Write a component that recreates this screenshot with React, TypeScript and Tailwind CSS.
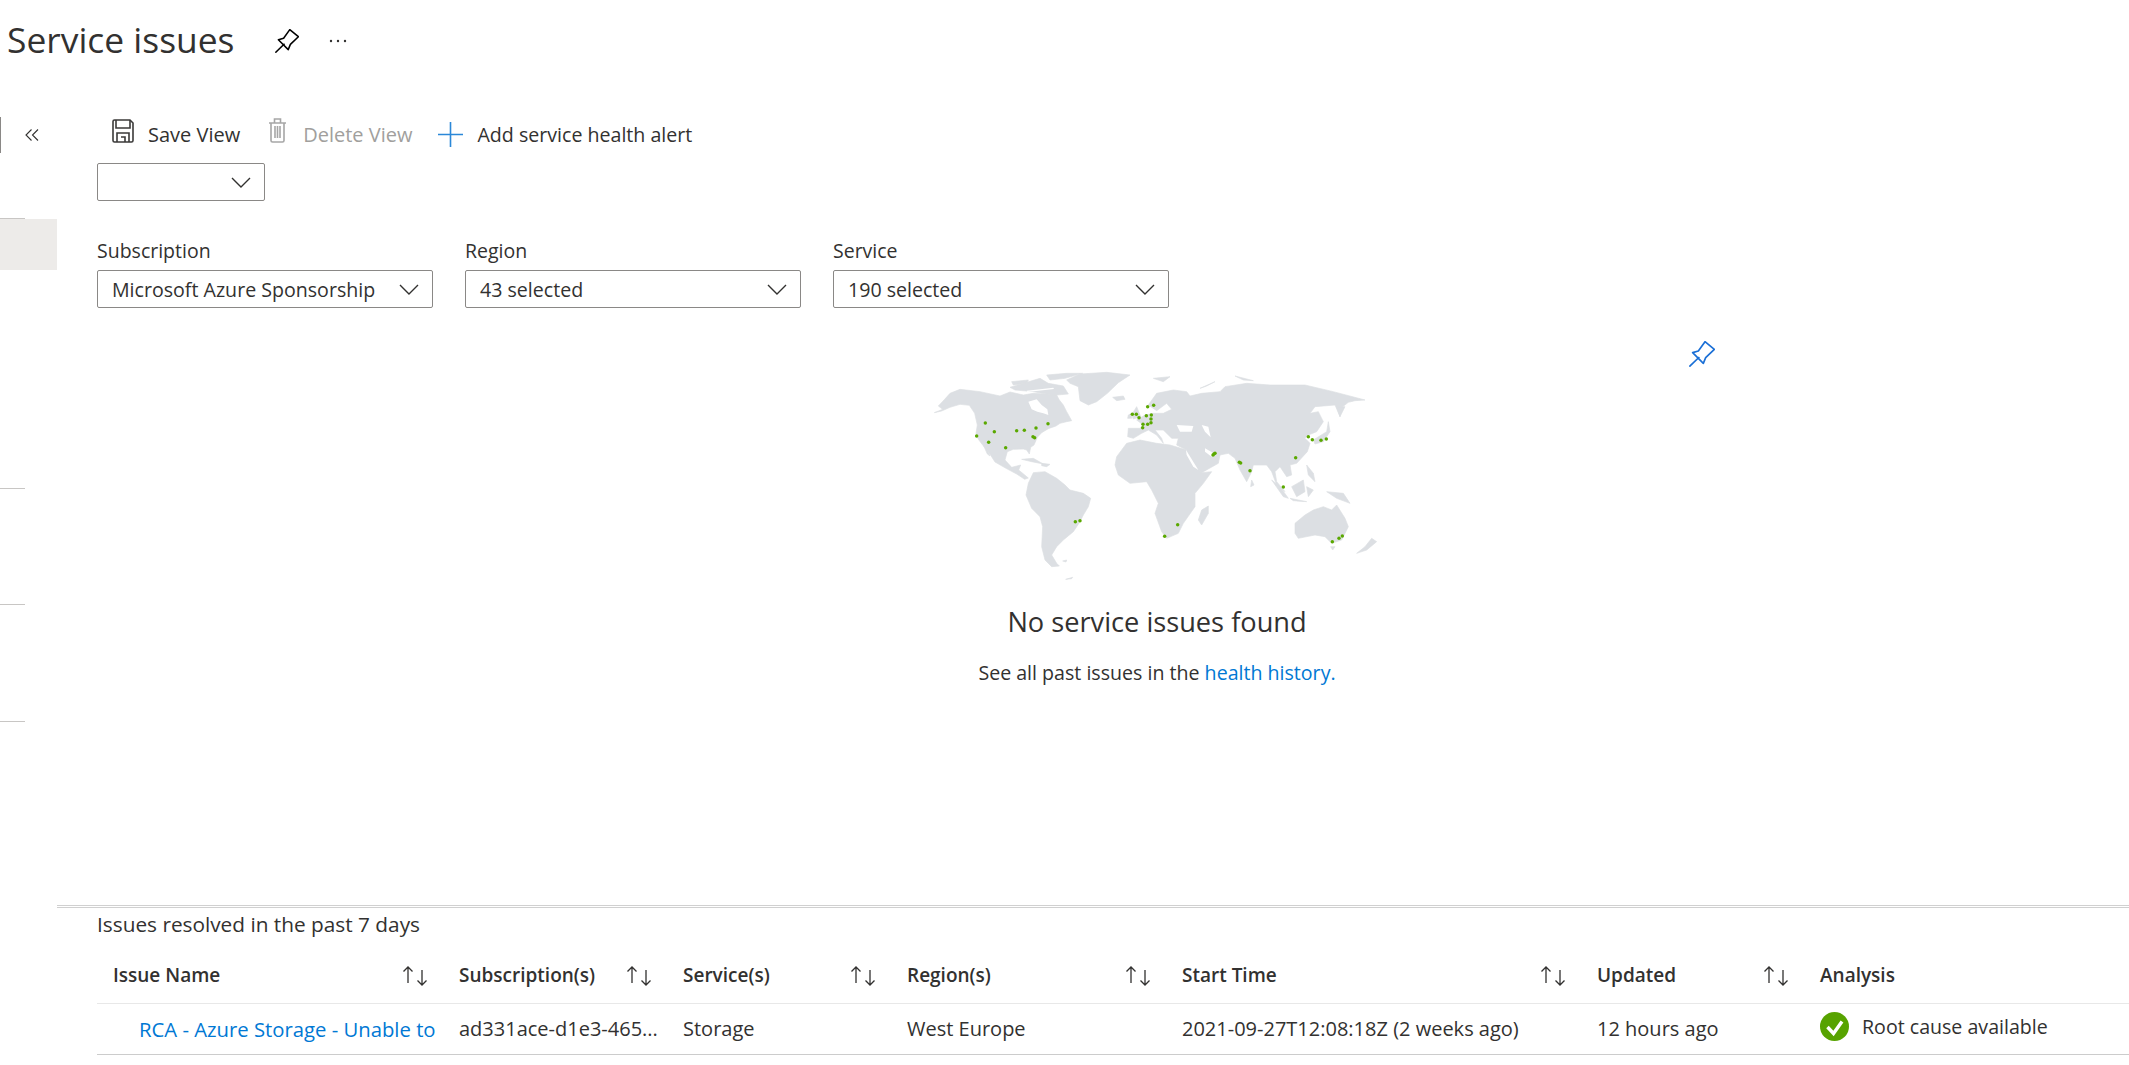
const font = 'font-["Open_Sans",sans-serif]';

const dots: [number, number][] = [
  [256, 219], [283, 245], [350, 242], [373, 241], [408, 234], [444, 221], [230, 258], [266, 277], [317, 293], [399, 260], [404, 263],
  [743, 170], [761, 166], [697, 193], [709, 193], [717, 203], [739, 197], [754, 195], [753, 207], [753, 218], [743, 223], [729, 223], [728, 233],
  [1225, 260], [1237, 269], [1263, 271], [1279, 267], [1187, 323], [939, 315], [942, 312], [945, 310], [1018, 337], [1022, 339], [1050, 362], [1150, 411],
  [526, 515], [540, 512], [833, 524], [794, 559], [1297, 575], [1317, 565], [1327, 558],
];

const land = [
  // north america
  '103,188 128,178 115,168 132,150 150,130 180,118 240,125 300,138 330,126 370,135 400,130 440,132 470,135 478,150 490,165 500,185 515,212 500,215 480,220 468,228 445,236 425,248 412,262 402,285 392,292 388,312 380,300 370,297 340,298 322,305 315,330 335,352 362,345 356,360 385,384 374,388 350,372 318,355 285,336 265,305 248,285 235,268 228,250 232,225 224,190 208,166 180,163 150,172 125,183',
  '255,280 270,318 262,312 250,285',
  '335,95 385,90 380,100 340,105',
  '330,112 420,85 445,100 490,108 505,132 460,136 400,125 345,120',
  '440,75 500,70 548,70 495,85 450,90',
  // greenland, iceland
  '500,90 540,72 620,67 690,75 655,98 622,130 590,155 565,165 540,152 535,110 510,100',
  '638,142 670,138 675,148 650,152',
  '365,328 400,325 430,342 395,335',
  '425,340 450,343 440,350 425,347',
  // south america
  '400,368 435,365 470,385 495,405 510,420 550,430 572,445 565,470 550,495 540,515 520,545 490,570 470,590 455,615 470,640 478,648 455,650 435,630 425,590 428,530 420,500 395,475 378,435 385,400',
  '488,633 500,630 498,636',
  '497,688 518,682 515,686',
  // africa
  '650,320 680,280 720,270 770,280 810,285 860,300 880,340 905,368 935,365 910,400 885,430 885,470 850,520 835,550 800,565 785,545 765,490 775,460 755,420 740,395 690,400 655,375 645,345',
  '925,468 925,490 905,525 895,510 905,480',
  // eurasia
  '683,260 685,235 720,235 730,225 710,210 735,195 760,190 790,190 815,178 800,160 770,182 745,165 770,130 820,120 860,125 870,138 905,130 960,125 975,110 1040,100 1110,105 1215,105 1300,125 1395,150 1365,152 1345,157 1322,175 1320,200 1305,165 1245,170 1230,190 1255,185 1270,215 1250,245 1225,255 1215,265 1230,280 1222,305 1190,340 1170,345 1175,375 1160,380 1140,350 1125,365 1130,395 1155,425 1130,405 1115,365 1100,345 1060,345 1055,365 1040,395 1020,360 1005,325 985,310 960,315 955,340 905,368 880,345 860,300 830,285 835,265 815,265 790,240 765,240 785,265 790,280 770,255 745,240 725,250 700,265',
  // islands
  '695,195 710,170 722,200 700,207',
  '685,195 695,190 695,205 683,205',
  '1240,270 1280,245 1285,215 1290,245 1270,275 1245,282',
  '1310,170 1335,170 1320,200',
  '1055,390 1062,405 1052,410',
  '1115,390 1140,410 1165,445 1150,440',
  '1170,445 1220,455 1180,452',
  '1175,410 1210,390 1215,425 1190,440',
  '1220,410 1240,420 1225,440',
  '1220,345 1240,370 1245,395 1225,375',
  '1280,425 1330,430 1350,460 1310,445',
  '1185,520 1215,495 1240,480 1270,470 1295,480 1310,465 1335,505 1345,530 1325,570 1295,580 1275,560 1245,555 1195,565 1185,550',
  '1292,590 1305,590 1298,600',
  '1415,565 1430,575 1400,600 1370,610 1395,590',
  '760,85 810,80 790,95',
  '900,115 945,95 920,108',
  '1005,78 1060,92 1030,90',
];

const water = [
  '385,155 410,148 425,165 442,178 445,195 430,190 412,185 395,178',
  '380,122 460,113 462,117 382,126',
  '830,225 880,228 875,245 840,245',
  '905,225 925,230 932,262 915,245',
  '915,295 950,315 935,320 915,305',
  '858,300 895,360 880,350 860,315',
];

function WorldMap() {
  return (
    <svg width="520" height="250" viewBox="-9 0 1560 750" className="block">
      {land.map((p, i) => <polygon key={i} points={p} fill="#dcdfe3" stroke="#dcdfe3" strokeWidth="2" strokeLinejoin="round" />)}
      {water.map((p, i) => <polygon key={i} points={p} fill="#ffffff" />)}
      {dots.map(([x, y], i) => <circle key={i} cx={x} cy={y} r="5.2" fill="#5aa800" />)}
    </svg>
  );
}

function PinIcon({ color, size }: { color: string; size: number }) {
  return (
    <svg width={size} height={size} viewBox="0 0 78 78" fill="none" stroke={color} strokeWidth="5">
      <path d="M1 77 31 48" />
      <path d="M11 35 28 30 48 2 76 25 50 50 43 67Z" strokeLinejoin="round" />
    </svg>
  );
}

function Chevron() {
  return (
    <svg width="20" height="11" viewBox="0 0 20 11" fill="none" stroke="#323130" strokeWidth="1.4">
      <path d="M1 1 10 10 19 1" />
    </svg>
  );
}

function Select({ value, label, width }: { value?: string; label?: string; width: string }) {
  return (
    <div className={`flex flex-col ${width}`}>
      {label && <div className="text-[19.5px] leading-[24px] text-[#323130] mb-[7px]">{label}</div>}
      <div className="h-[38px] rounded-[2px] border border-[#8a8886] flex items-center justify-between pl-[14px] pr-[13px]">
        <span className="text-[19.6px] mt-[1px] text-[#323130] whitespace-nowrap">{value}</span>
        <Chevron />
      </div>
    </div>
  );
}

function SortIcon() {
  return (
    <svg width="28" height="20" viewBox="0 0 28 20" fill="none" stroke="#323130" strokeWidth="1.3">
      <path d="M7 17V1M2.5 5.5 7 1l4.5 4.5" />
      <path d="M21 4v15M16.5 14.5 21 19l4.5-4.5" />
    </svg>
  );
}

function Toolbar() {
  return (
    <div className="flex items-center h-[36px] pl-[15px] text-[20px]">
      <svg className="-mt-[8px]" width="22" height="24" viewBox="0 0 22 24" fill="none" stroke="#3b3a39" strokeWidth="1.6">
        <path d="M1 2.5A1.5 1.5 0 0 1 2.5 1H18l3 3v17.5a1.5 1.5 0 0 1-1.5 1.5h-17A1.5 1.5 0 0 1 1 21.5Z" />
        <path d="M4 1v8h14V1M5 23v-9h12v9M9 18h4v5" />
      </svg>
      <span className="ml-[14px] text-[#323130]">Save View</span>
      <svg className="ml-[28px] -mt-[9px]" width="19" height="25" viewBox="0 0 19 25" fill="none" stroke="#a6a6a6" strokeWidth="1.6">
        <path d="M1 5h17M3 5v17.5A1.5 1.5 0 0 0 4.5 24h10a1.5 1.5 0 0 0 1.5-1.5V5M6.5 5V1h6v4M7 8v12M9.5 8v12M12 8v12" />
      </svg>
      <span className="ml-[16px] text-[#a19f9d]">Delete View</span>
      <svg className="ml-[26px] -mt-[2px]" width="25" height="25" viewBox="0 0 25 25" fill="none" stroke="#2b88d8" strokeWidth="1.6">
        <path d="M12.5 0v25M0 12.5h25" />
      </svg>
      <span className="ml-[14px] text-[19.6px] text-[#323130]">Add service health alert</span>
    </div>
  );
}

const columns = ['Issue Name', 'Subscription(s)', 'Service(s)', 'Region(s)', 'Start Time', 'Updated'];
const gridCols = 'grid grid-cols-[346px_224px_224px_275px_415px_223px_1fr]';

function IssuesTable() {
  return (
    <div className="pl-[40px]">
      <div className="text-[20.8px] leading-[24px] text-[#323130] mt-[4px]">Issues resolved in the past 7 days</div>
      <div className={`${gridCols} h-[59px] pt-[3px] mt-[9px] items-center border-b border-[#e8e8e8] text-[19px] font-semibold text-[#323130]`}>
        {columns.map(c => (
          <div key={c} className="flex items-center justify-between pl-[16px] pr-[14px]">
            <span>{c}</span>
            <SortIcon />
          </div>
        ))}
        <div className="pl-[16px]">Analysis</div>
      </div>
      <div className={`${gridCols} h-[51px] items-center border-b border-[#cccccc] text-[20px] text-[#323130]`}>
        <div className="pl-[42px] whitespace-nowrap text-[20.3px] text-[#0078d4]">RCA - Azure Storage - Unable to</div>
        <div className="pl-[16px] whitespace-nowrap">ad331ace-d1e3-465...</div>
        <div className="pl-[16px]">Storage</div>
        <div className="pl-[16px]">West Europe</div>
        <div className="pl-[16px] whitespace-nowrap">2021-09-27T12:08:18Z (2 weeks ago)</div>
        <div className="pl-[16px]">12 hours ago</div>
        <div className="pl-[16px] flex items-center -mt-[5px]">
          <svg width="29" height="29" viewBox="0 0 29 29">
            <circle cx="14.5" cy="14.5" r="14.5" fill="#57a300" />
            <path d="M7.5 15l6 6.5L22 9.5" fill="none" stroke="#ffffff" strokeWidth="3.4" />
          </svg>
          <span className="ml-[13px] text-[19.6px]">Root cause available</span>
        </div>
      </div>
    </div>
  );
}

export default function App() {
  return (
    <div className={`${font} w-[2129px] h-[1065px] overflow-hidden bg-white flex flex-col`}>
      {/* Title bar */}
      <div className="h-[82px] flex items-center pl-[7px]">
        <h1 className="text-[35.4px] -mt-[2px] text-[#323130]">Service issues</h1>
        <div className="ml-[41px]"><PinIcon color="#000000" size={24} /></div>
        <svg className="ml-[30px]" width="18" height="4" viewBox="0 0 18 4" fill="#323130">
          <circle cx="2" cy="2" r="1.2" /><circle cx="9" cy="2" r="1.2" /><circle cx="16" cy="2" r="1.2" />
        </svg>
      </div>

      <div className="flex flex-1 min-h-0">
        {/* Collapsed blade menu */}
        <div className="w-[57px] shrink-0 flex flex-col">
          <div className="h-[36px] mt-[35px] flex items-center border-l border-[#8a8886] pl-[24px]">
            <svg width="14" height="12" viewBox="0 0 14 12" fill="none" stroke="#323130" strokeWidth="1.1">
              <path d="M6.5 0.5 1 6l5.5 5.5M13 0.5 7.5 6l5.5 5.5" />
            </svg>
          </div>
          <div className="w-[25px] h-[1px] mt-[65px] bg-[#c8c6c4]" />
          <div className="h-[51px] bg-[#edebe9]" />
          <div className="w-[25px] h-[1px] mt-[218px] bg-[#c8c6c4]" />
          <div className="w-[25px] h-[1px] mt-[115px] bg-[#c8c6c4]" />
          <div className="w-[25px] h-[1px] mt-[116px] bg-[#c8c6c4]" />
        </div>

        <div className="flex-1 min-w-0 flex flex-col">
          <div className="flex-1 min-h-0">
            <div className="mt-[35px] pl-[40px]"><Toolbar /></div>
            <div className="pl-[40px] mt-[10px]"><Select width="w-[168px]" /></div>
            <div className="pl-[40px] mt-[38px] flex gap-[32px]">
              <Select label="Subscription" value="Microsoft Azure Sponsorship" width="w-[336px]" />
              <Select label="Region" value="43 selected" width="w-[336px]" />
              <Select label="Service" value="190 selected" width="w-[336px]" />
            </div>
            <div className="flex justify-end pr-[414px] mt-[33px]"><PinIcon color="#1a6fd6" size={26} /></div>
            <div className="w-[520px] ml-[840px] -mt-[17px] flex flex-col items-center">
              <WorldMap />
              <div className="text-[27.2px] leading-[36px] text-[#323130] mt-[4px]">No service issues found</div>
              <div className="text-[19.6px] leading-[24px] text-[#323130] mt-[21px] whitespace-nowrap">
                See all past issues in the <span className="text-[#0078d4]">health history.</span>
              </div>
            </div>
          </div>
          {/* Resolved issues */}
          <div className="h-[160px] shrink-0 border-t-[3px] border-double border-[#d0d0d0]">
            <IssuesTable />
          </div>
        </div>
      </div>
    </div>
  );
}
